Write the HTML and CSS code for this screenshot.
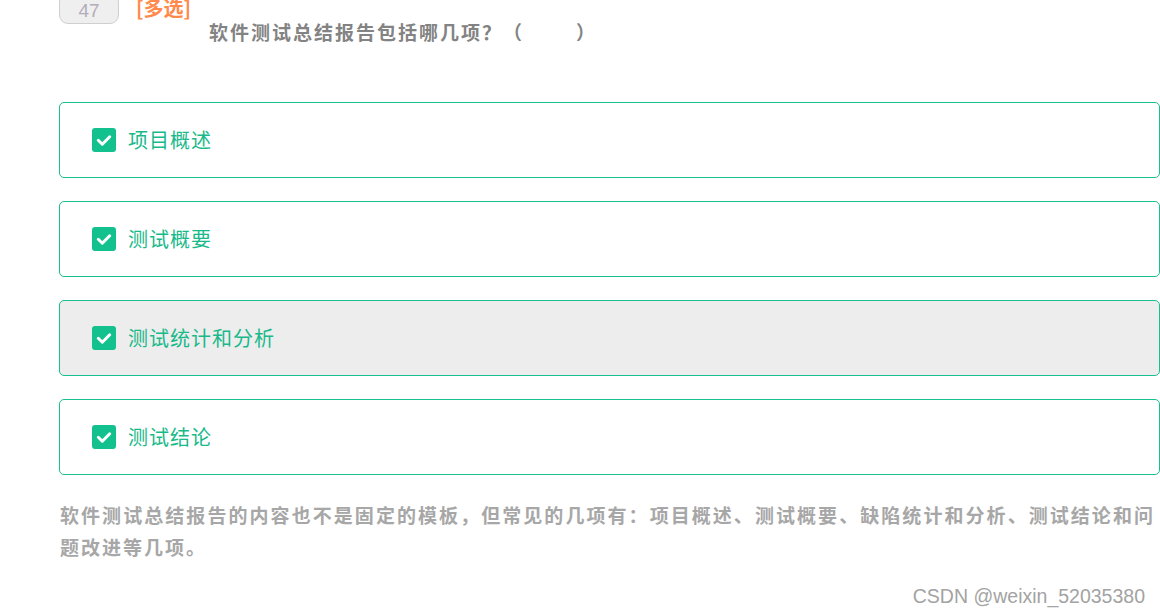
FILE: index.html
```html
<!DOCTYPE html>
<html lang="zh-CN">
<head>
<meta charset="utf-8">
<title>多选题 47</title>
<link rel="stylesheet" href="styles.css">
</head>
<body>
<div class="page">
  <div class="head">
    <span class="num">47</span>
    <span class="tag">[多选]</span>
  </div>
  <div class="question">软件测试总结报告包括哪几项？（<span class="blank"></span>）</div>

  <ul class="options">
    <li class="opt">
      <svg class="cb" viewBox="0 0 24 24" width="24" height="24"><rect width="24" height="24" rx="3" fill="#13c18f"/><path d="M6.3 12.3l4 3.9 7.4-7.4" fill="none" stroke="#fff" stroke-width="3" stroke-linecap="round" stroke-linejoin="round"/></svg>
      <span class="label">项目概述</span>
    </li>
    <li class="opt">
      <svg class="cb" viewBox="0 0 24 24" width="24" height="24"><rect width="24" height="24" rx="3" fill="#13c18f"/><path d="M6.3 12.3l4 3.9 7.4-7.4" fill="none" stroke="#fff" stroke-width="3" stroke-linecap="round" stroke-linejoin="round"/></svg>
      <span class="label">测试概要</span>
    </li>
    <li class="opt hover">
      <svg class="cb" viewBox="0 0 24 24" width="24" height="24"><rect width="24" height="24" rx="3" fill="#13c18f"/><path d="M6.3 12.3l4 3.9 7.4-7.4" fill="none" stroke="#fff" stroke-width="3" stroke-linecap="round" stroke-linejoin="round"/></svg>
      <span class="label">测试统计和分析</span>
    </li>
    <li class="opt">
      <svg class="cb" viewBox="0 0 24 24" width="24" height="24"><rect width="24" height="24" rx="3" fill="#13c18f"/><path d="M6.3 12.3l4 3.9 7.4-7.4" fill="none" stroke="#fff" stroke-width="3" stroke-linecap="round" stroke-linejoin="round"/></svg>
      <span class="label">测试结论</span>
    </li>
  </ul>

  <p class="explain">软件测试总结报告的内容也不是固定的模板，但常见的几项有：项目概述、测试概要、缺陷统计和分析、测试结论和问题改进等几项。</p>
</div>
<div class="watermark">CSDN @weixin_52035380</div>
</body>
</html>
```

FILE: styles.css
```css
html, body {
  margin: 0;
  padding: 0;
  background: #fff;
  width: 1160px;
  height: 614px;
  overflow: hidden;
  font-family: "Noto Sans CJK SC", "Liberation Sans", sans-serif;
}

.page {
  position: relative;
}

.head {
  display: flex;
  align-items: flex-start;
  margin-top: -7px;
  padding-left: 59px;
  height: 24px;
}

.num {
  box-sizing: border-box;
  width: 60px;
  height: 31px;
  border: 1px solid #cfcfcf;
  border-radius: 9px;
  background: #efefef;
  color: #b3adb9;
  font-family: "Liberation Sans", sans-serif;
  font-size: 19px;
  line-height: 33px;
  text-align: center;
}

.tag {
  margin-left: 17px;
  color: #ff8a4c;
  font-size: 20px;
  font-weight: 700;
  line-height: 26px;
  margin-top: 2px;
}

.question {
  padding-left: 209px;
  margin-top: 2px;
  color: #838383;
  font-size: 19px;
  font-weight: 700;
  letter-spacing: 2px;
  line-height: 26px;
}

.blank {
  display: inline-block;
  width: 52px;
}

.options {
  list-style: none;
  margin: 57px 0 0 59px;
  padding: 0;
  display: flex;
  flex-direction: column;
  gap: 23px;
}

.opt {
  box-sizing: border-box;
  width: 1101px;
  height: 76px;
  border: 1px solid #19c08e;
  border-radius: 5px;
  display: flex;
  align-items: center;
  padding-left: 32px;
  gap: 12px;
  background: #fff;
}

.opt.hover {
  background: #ededed;
}

.cb {
  flex: none;
  display: block;
}

.label {
  color: #18b98a;
  font-size: 20px;
  letter-spacing: 1px;
  line-height: 24px;
}

.explain {
  box-sizing: border-box;
  margin: 24px 0 0 60px;
  width: 1095px;
  color: #a7a7a7;
  font-size: 19px;
  font-weight: 700;
  letter-spacing: 2px;
  line-height: 32px;
  text-align: justify;
}

.watermark {
  position: absolute;
  right: 15px;
  bottom: 7px;
  color: #a3a3a3;
  font-family: "Liberation Sans", sans-serif;
  font-size: 19.5px;
  line-height: 22px;
}
```
